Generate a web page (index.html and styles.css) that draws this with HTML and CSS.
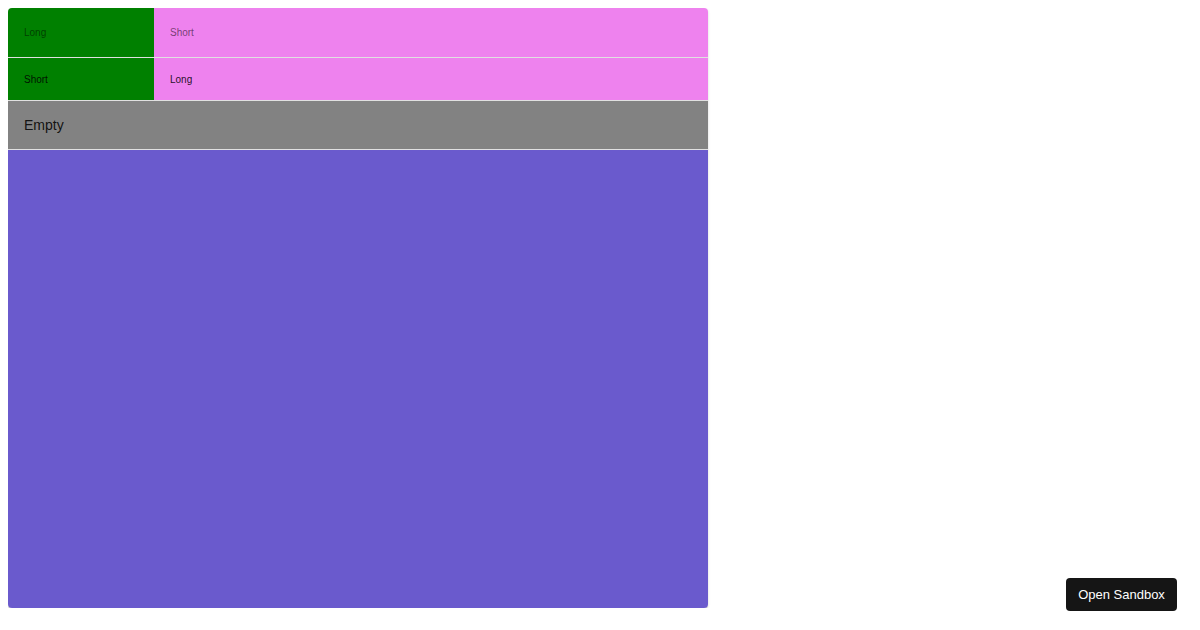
FILE: index.html
```html
<!DOCTYPE html>
<html>
<head>
<meta charset="utf-8">
<link rel="stylesheet" href="styles.css">
</head>
<body>
<div class="paper">
  <table class="table">
    <thead>
      <tr class="row head-row">
        <th class="cell col-a">Long</th>
        <th class="cell col-b">Short</th>
      </tr>
    </thead>
    <tbody>
      <tr class="row body-row">
        <td class="cell col-a">Short</td>
        <td class="cell col-b">Long</td>
      </tr>
      <tr class="row empty-row">
        <td class="cell empty" colspan="2">Empty</td>
      </tr>
      <tr class="row fill-row">
        <td class="cell fill" colspan="2"></td>
      </tr>
    </tbody>
  </table>
</div>
<button class="sandbox-btn">Open Sandbox</button>
</body>
</html>
```
FILE: styles.css
```css
html, body {
  margin: 0;
  padding: 0;
  background: #ffffff;
}
body {
  margin: 8px;
  font-family: "Liberation Sans", Arial, Helvetica, sans-serif;
}
.paper {
  width: 700px;
  height: 600px;
  border-radius: 4px;
  overflow: hidden;
  box-shadow: 0 2px 1px -1px rgba(0,0,0,0.2), 0 1px 1px 0 rgba(0,0,0,0.14), 0 1px 3px 0 rgba(0,0,0,0.12);
}
.table {
  width: 100%;
  height: 100%;
  border-collapse: collapse;
  border-spacing: 0;
  table-layout: fixed;
}
.cell {
  padding: 0 16px;
  text-align: left;
  vertical-align: middle;
  border-bottom: 1px solid #e0e0e0;
  font-weight: 400;
}
.head-row .cell {
  height: 49px;
  font-size: 10px;
  color: rgba(0,0,0,0.54);
}
.body-row .cell {
  height: 42px;
  font-size: 10px;
  color: rgba(0,0,0,0.87);
}
.col-a {
  width: 114px;
  background: #008000;
}
.col-b {
  background: #ee82ee;
}
.empty-row .cell {
  height: 48px;
  font-size: 14px;
  color: rgba(0,0,0,0.87);
  background: #828282;
}
.fill-row .cell {
  height: 458px;
  background: #6a5acd;
  border-bottom: none;
}
.sandbox-btn {
  position: fixed;
  right: 23px;
  bottom: 19px;
  width: 111px;
  height: 33px;
  padding: 0;
  border: none;
  border-radius: 4px;
  background: #151515;
  color: #ffffff;
  font-family: "Liberation Sans", Arial, Helvetica, sans-serif;
  font-size: 13px;
  cursor: pointer;
}
```
